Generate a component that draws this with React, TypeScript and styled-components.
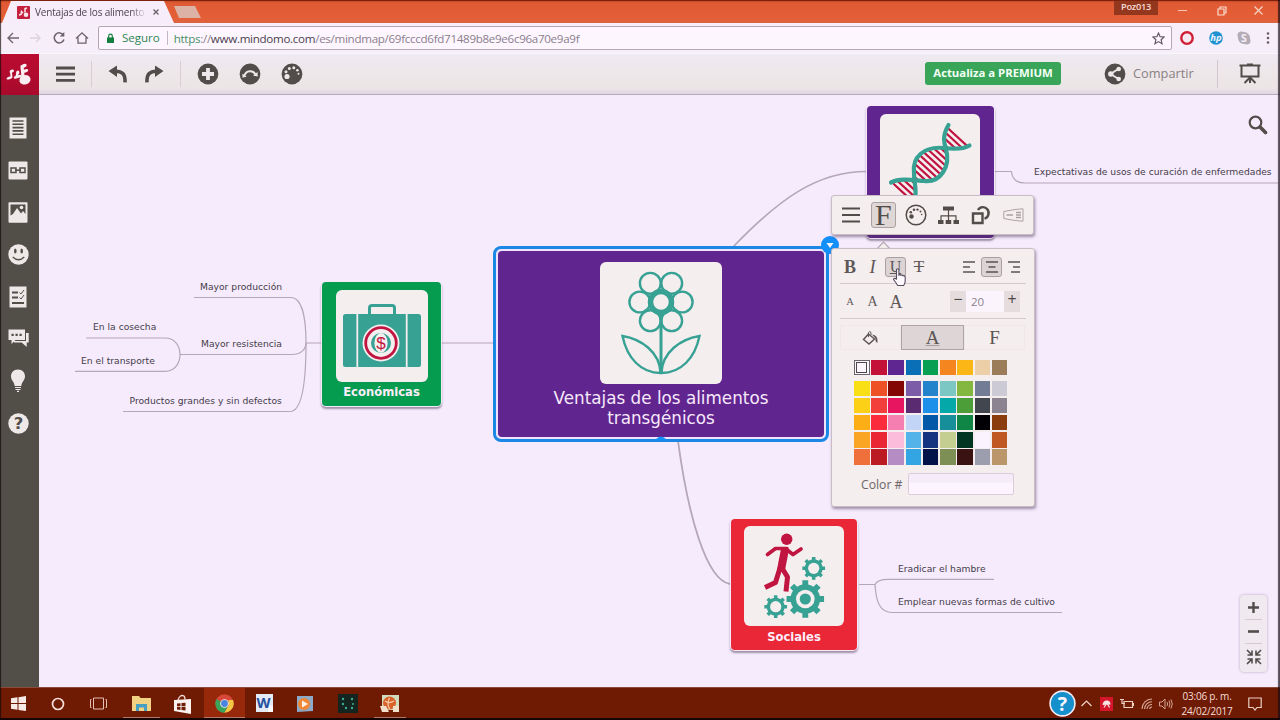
import React from "react";
import styled, { createGlobalStyle, css } from "styled-components";

const UI = `"Open Sans", "Noto Sans", sans-serif`;
const MAP = `"DejaVu Sans", sans-serif`;
const SERIF = `"Liberation Serif", serif`;
const INK = "#524d4b";
const TEAL = "#37a194";
const RED = "#c01540";
const PAPER = "#f5eeef";

const GlobalStyle = createGlobalStyle`
  * { box-sizing: border-box; }
  body { margin: 0; background: #f6ebfd; overflow: hidden; }
  svg { display: block; flex: none; }
`;

const Screen = styled.div`
  position: relative;
  width: 1280px;
  height: 720px;
  display: flex;
  flex-direction: column;
  overflow: hidden;
  font-family: ${UI};
  background: #f6ebfd;
`;

const EdgeShade = styled.div`
  position: absolute;
  inset: 0;
  pointer-events: none;
  box-shadow: inset 2px 0 1px -1px rgba(20, 10, 10, 0.75), inset -3px 0 1px -1px rgba(20, 10, 20, 0.7),
    inset 0 1px 0 #7e210c, inset 0 -2px 0 #150504;
`;

/* ---------- browser ---------- */

const TitleBar = styled.div`
  height: 23px;
  flex: none;
  display: flex;
  align-items: stretch;
  background: linear-gradient(#b8421f 0, #e05b35 3px, #e45f36 18px, #dc6442);
`;

const Tab = styled.div`
  width: 172px;
  margin-left: 2px;
  padding: 1px 13px 0 15px;
  display: flex;
  align-items: center;
  gap: 5px;
  background: #f7ecfa;
  clip-path: polygon(0 100%, 9px 1px, 162px 1px, 100% 100%);
`;

const TabTitle = styled.span`
  width: 112px;
  white-space: nowrap;
  font-size: 10px;
  letter-spacing: -0.18px;
  color: #4c4450;
  -webkit-mask-image: linear-gradient(90deg, #000 85%, rgba(0, 0, 0, 0.2) 97%);
`;

const NewTab = styled.div`
  width: 27px;
  height: 12px;
  margin: 6px 0 0 0;
  background: #dcb2a6;
  clip-path: polygon(0 0, 21px 0, 100% 100%, 5px 100%);
`;

const WindowControls = styled.div`
  margin-left: auto;
  display: flex;
  align-items: flex-start;
`;

const UserBadge = styled.div`
  width: 44px;
  height: 15px;
  line-height: 13px;
  text-align: center;
  font-size: 9.3px;
  font-weight: 600;
  letter-spacing: -0.3px;
  color: #f6dcd6;
  background: #93371f;
`;

const WindowButton = styled.div<{ $w: number }>`
  width: ${(p) => p.$w}px;
  height: 21px;
  display: flex;
  align-items: center;
  justify-content: center;
`;

const AddressRow = styled.div`
  height: 31px;
  flex: none;
  display: flex;
  align-items: center;
  background: #f6eef8;
  border-bottom: 1px solid #fbf5fc;
`;

const NavButtons = styled.div`
  width: 98px;
  display: flex;
  align-items: center;
  padding-left: 6px;
  gap: 9px;
`;

const UrlBox = styled.div`
  width: 1074px;
  height: 24px;
  display: flex;
  align-items: center;
  padding: 0 6px 0 7px;
  background: #fdf6ff;
  border: 1px solid #b5a8b4;
  border-radius: 2px;
  font-size: 11.6px;
  white-space: nowrap;
`;

const Secure = styled.span`
  margin-left: 7px;
  color: #2d8550;
  letter-spacing: -0.05px;
  padding-right: 7px;
  border-right: 1px solid #c5b6c6;
  line-height: 14px;
`;

const Url = styled.span`
  margin-left: 6px;
  color: #8b7e8c;
  letter-spacing: -0.3px;
  em { font-style: normal; color: #4a9067; }
  b { font-weight: 400; color: #4a414c; }
`;

const Extensions = styled.div`
  flex: 1;
  display: flex;
  align-items: center;
  justify-content: space-between;
  padding: 0 10px 0 8px;
`;

/* ---------- app toolbar ---------- */

const AppBar = styled.div`
  height: 41px;
  flex: none;
  display: flex;
  align-items: stretch;
  background: linear-gradient(#efe9f2, #ede7e9 50%, #ece5e6 85%, #dfd6e2);
  border-bottom: 1px solid #b7abbb;
`;

const Logo = styled.div`
  width: 39px;
  height: 41px;
  padding-bottom: 2px;
  background: linear-gradient(#bb0c31, #a80a2c);
  display: flex;
  align-items: center;
  justify-content: center;
`;

const Cell = styled.div<{ $w: number }>`
  width: ${(p) => p.$w}px;
  display: flex;
  align-items: center;
  justify-content: center;
  padding-bottom: 1px;
`;

const Rule = styled.div<{ $ml?: number; $mr?: number }>`
  width: 1px;
  margin: 7px ${(p) => p.$mr ?? 0}px 7px ${(p) => p.$ml ?? 0}px;
  background: #d6cdd6;
`;

const BarRight = styled.div`
  margin-left: auto;
  display: flex;
  align-items: center;
`;

const Premium = styled.div`
  width: 136px;
  height: 23px;
  margin: -2px 42px 0 0;
  line-height: 22px;
  text-align: center;
  border-radius: 3px;
  background: #38a558;
  color: #f4fff6;
  font-size: 11.4px;
  letter-spacing: -0.04px;
  font-weight: 700;
  white-space: nowrap;
`;

const ShareText = styled.div`
  width: 84px;
  padding: 0 0 3px 7px;
  font-size: 12.8px;
  color: #8a8084;
`;

/* ---------- workspace ---------- */

const Work = styled.div`
  flex: 1;
  display: flex;
  min-height: 0;
`;

const Side = styled.div`
  width: 39px;
  flex: none;
  display: flex;
  flex-direction: column;
  align-items: center;
  padding: 12px 3px 0 0;
  background: #524e48;
`;

const SideItem = styled.div`
  height: 42.15px;
  display: flex;
  align-items: center;
`;

const Canvas = styled.div`
  position: relative;
  flex: 1;
  background: #f6ebfd;
`;

const Links = styled.svg`
  position: absolute;
  left: 0;
  top: 0;
`;

const at = css<{ $x: number; $y: number }>`
  position: absolute;
  left: ${(p) => p.$x - 39}px;
  top: ${(p) => p.$y - 95}px;
`;

const Topic = styled.div<{ $x: number; $y: number }>`
  ${at}
  height: 14px;
  line-height: 14px;
  font-family: ${MAP};
  font-size: 9.2px;
  white-space: nowrap;
  color: #453c48;
`;

const Node = styled.div<{ $x: number; $y: number; $w: number; $h: number; $c: string }>`
  ${at}
  width: ${(p) => p.$w}px;
  height: ${(p) => p.$h}px;
  display: flex;
  flex-direction: column;
  align-items: center;
  padding-top: 7.5px;
  border-radius: 4px;
  background: ${(p) => p.$c};
  box-shadow: 0 0 0 1px #f4eaf8, 0 2px 2px 1px rgba(90, 70, 100, 0.55);
`;

const Central = styled.div<{ $x: number; $y: number }>`
  ${at}
  width: 336px;
  height: 196px;
  padding: 2px;
  border: 3.5px solid #1c88e6;
  border-radius: 8px;
  background: #efe4fb;
`;

const CentralFill = styled.div`
  height: 100%;
  padding-top: 11px;
  display: flex;
  flex-direction: column;
  align-items: center;
  border-radius: 4px;
  background: #61258f;
`;

const CentralTitle = styled.div`
  margin-top: 4px;
  font-family: ${MAP};
  font-size: 16.8px;
  line-height: 20px;
  text-align: center;
  color: #f6e9fb;
`;

const Card = styled.div<{ $s: number }>`
  width: ${(p) => p.$s}px;
  height: ${(p) => p.$s}px;
  flex: none;
  border-radius: 6px;
  overflow: hidden;
  background: ${PAPER};
`;

const NodeLabel = styled.div`
  margin-top: 3.5px;
  font-family: ${MAP};
  font-size: 11.6px;
  font-weight: 700;
  line-height: 14px;
  color: #fbeefa;
`;

const Handle = styled.div<{ $x: number; $y: number }>`
  ${at}
`;

const surface = css`
  background: #f5eeee;
  border: 1px solid #c9bec6;
  border-radius: 3px;
  box-shadow: 1px 2px 3px rgba(70, 50, 80, 0.5);
`;

const FloatBar = styled.div<{ $x: number; $y: number }>`
  ${at}
  ${surface}
  width: 203px;
  height: 40px;
  display: flex;
  align-items: center;
  padding-left: 6px;
  padding-bottom: 1px;
`;

const FloatItem = styled.div<{ $on?: boolean }>`
  width: 26px;
  height: 26px;
  margin-right: 6.7px;
  display: flex;
  align-items: center;
  justify-content: center;
  border-radius: 3px;
  font-family: ${SERIF};
  font-size: 30px;
  line-height: 26px;
  color: ${INK};
  ${(p) => p.$on && "background:#dfd6d6;border:1px solid #aaa1a1;"}
`;

const Panel = styled.div<{ $x: number; $y: number }>`
  ${at}
  ${surface}
  width: 204px;
  height: 259px;
  padding: 0 8px;
  display: flex;
  flex-direction: column;
`;

const PanelRow = styled.div<{ $h: number; $pt?: number }>`
  height: ${(p) => p.$h}px;
  flex: none;
  display: flex;
  align-items: center;
  padding-top: ${(p) => p.$pt ?? 0}px;
  border-bottom: 1px solid #d3cacf;
`;

const Glyph = styled.div<{ $w: number; $s: number; $on?: boolean; $b?: boolean; $i?: boolean; $line?: string }>`
  width: ${(p) => p.$w}px;
  height: 20px;
  display: flex;
  align-items: center;
  justify-content: center;
  border: 1px solid ${(p) => (p.$on ? "#aaa0a2" : "transparent")};
  border-radius: 3px;
  background: ${(p) => (p.$on ? "#dbd3d4" : "transparent")};
  font-family: ${SERIF};
  font-size: ${(p) => p.$s}px;
  font-weight: ${(p) => (p.$b ? 700 : 400)};
  font-style: ${(p) => (p.$i ? "italic" : "normal")};
  text-decoration: ${(p) => p.$line ?? "none"};
  line-height: 18px;
  color: #5f5858;
`;

const Push = styled.div<{ $mr?: number }>`
  margin-left: auto;
  margin-right: ${(p) => p.$mr ?? 0}px;
  display: flex;
  align-items: center;
`;

const Step = styled.div`
  width: 16px;
  height: 21px;
  background: #e5dddd;
  color: #4e4848;
  font-size: 16px;
  line-height: 16px;
  text-align: center;
`;

const SizeField = styled.div`
  width: 38px;
  height: 21px;
  padding-left: 5px;
  background: #fbf4fd;
  color: #8b8290;
  font-size: 11.5px;
  line-height: 21px;
`;

const Tabs = styled.div`
  height: 25px;
  margin-top: 6px;
  flex: none;
  display: grid;
  grid-template-columns: 61px 63px 61px;
`;

const TabItem = styled.div<{ $on?: boolean }>`
  display: flex;
  align-items: center;
  justify-content: center;
  font-family: ${SERIF};
  font-size: 19px;
  color: #5b5454;
  border: 1px solid ${(p) => (p.$on ? "#aea4a6" : "#efe7ea")};
  background: ${(p) => (p.$on ? "#ded5d6" : "transparent")};
  u { text-decoration-color: #a79e9f; }
`;

const Swatches = styled.div<{ $mt: number }>`
  margin: ${(p) => p.$mt}px 0 0 14px;
  display: grid;
  grid-template-columns: repeat(9, 15.5px);
  grid-auto-rows: 15.5px;
  gap: 1.72px;
`;

const Swatch = styled.div<{ $c: string }>`
  background: ${(p) => p.$c};
`;

const NoColor = styled.div`
  border: 1px solid #6b6468;
  background: #fbf6fc;
  display: flex;
  align-items: center;
  justify-content: center;
  &::after {
    content: "";
    width: 9px;
    height: 9px;
    border: 1px solid #4f494d;
  }
`;

const HexRow = styled.div`
  margin-top: 8.5px;
  display: flex;
  align-items: center;
  padding-left: 21px;
  font-size: 12.2px;
  color: #6d6567;
`;

const HexInput = styled.div`
  width: 106px;
  height: 22px;
  margin-left: auto;
  margin-right: 12px;
  border: 1px solid #d8cdda;
  border-radius: 2px;
  background: linear-gradient(#f4ecf8 40%, #fcf5ff 45%);
`;

const ZoomBox = styled.div<{ $x: number; $y: number }>`
  ${at}
  width: 27px;
  height: 77px;
  display: flex;
  flex-direction: column;
  border-radius: 4px;
  background: #f0e9ef;
  box-shadow: 0 0 3px rgba(90, 70, 110, 0.4);
`;

const ZoomItem = styled.div<{ $h: number; $line?: boolean }>`
  height: ${(p) => p.$h}px;
  margin: 0 5px;
  display: flex;
  align-items: center;
  justify-content: center;
  ${(p) => p.$line && "border-bottom:1px solid #d3cad3;"}
`;

/* ---------- taskbar ---------- */

const TaskBar = styled.div`
  height: 33px;
  flex: none;
  display: flex;
  background: #6f1b04;
  border-top: 1px solid #8a4a3c;
`;

const Apps = styled.div`
  display: grid;
  grid-template-columns: 36px 43px 39px 46px 40px 41px 39px 42px 43px 41px;
`;

const Task = styled.div<{ $active?: boolean; $open?: boolean }>`
  position: relative;
  display: flex;
  align-items: center;
  justify-content: center;
  padding-bottom: 1px;
  background: ${(p) => (p.$active ? "#97280a" : "transparent")};
  ${(p) =>
    (p.$open || p.$active) &&
    css`
      &::after {
        content: "";
        position: absolute;
        left: ${p.$active ? 0 : 5}px;
        right: ${p.$active ? 0 : 4}px;
        bottom: 1px;
        height: 2px;
        background: #b0786a;
      }
    `}
`;

const Tray = styled.div`
  margin-left: auto;
  display: flex;
  align-items: center;
  padding-bottom: 1px;
`;

const TrayCell = styled.div<{ $w: number }>`
  width: ${(p) => p.$w}px;
  display: flex;
  justify-content: center;
`;

const Clock = styled.div`
  width: 66px;
  text-align: center;
  font-size: 10px;
  letter-spacing: -0.2px;
  line-height: 15px;
  color: #f5ddd6;
  white-space: nowrap;
`;

/* ---------- drawings ---------- */

const Svg = ({ w, h = w, vb, children, ...rest }: any) => (
  <svg width={w} height={h} viewBox={vb ?? `0 0 ${w} ${h}`} fill="none" {...rest}>
    {children}
  </svg>
);

const MindLogo = () => (
  <Svg w={28} h={24} vb="5 61 28 24">
    <g fill="#fbeef2">
      <ellipse cx="24" cy="78.800" rx="5.600" ry="4.700" transform="rotate(-14 24 78.800)" />
      <ellipse cx="23" cy="64.800" rx="2.800" ry="1.800" transform="rotate(-20 23 64.800)" />
      <ellipse cx="24" cy="70" rx="3.400" ry="1.700" transform="rotate(-20 24 70)" />
      <ellipse cx="16.800" cy="71.500" rx="1.600" ry="1.900" />
      <ellipse cx="10.800" cy="70.200" rx="2.300" ry="1.500" transform="rotate(-25 10.800 70.200)" />
      <ellipse cx="8.200" cy="77" rx="2.800" ry="1.400" transform="rotate(-15 8.200 77)" />
    </g>
    <g stroke="#fbeef2" strokeLinecap="round">
      <path d="M21 65.500 22 75.500" strokeWidth="3.200" />
      <path d="M19.500 75 14 76.500M16.500 72l-1 4" strokeWidth="2.400" />
      <path d="M10 71.500 10.500 76" strokeWidth="1.900" />
    </g>
  </Svg>
);

const ArrowTurn = ({ flip }: { flip?: boolean }) => (
  <Svg w={20} h={18}>
    <g transform={flip ? "matrix(-1 0 0 1 20 0)" : undefined}>
      <path d="M.5 6 9 .5V12Z" fill={INK} />
      <path d="M7 6.200C14 6 17.500 9 17 17.300" stroke={INK} strokeWidth="3.600" />
    </g>
  </Svg>
);

const Disc = ({ children }: any) => (
  <Svg w={22}>
    <circle cx="11" cy="11" r="10.400" fill={INK} />
    {children}
  </Svg>
);

const gear = (cx: number, cy: number, r: number, teeth: number) => {
  const pts: string[] = [];
  for (let i = 0; i < teeth; i++) {
    const a = (i / teeth) * Math.PI * 2 - Math.PI / 2;
    const k = Math.PI / teeth;
    [
      [-0.95, 0.78],
      [-0.5, 0.78],
      [-0.4, 1],
      [0.4, 1],
      [0.5, 0.78],
    ].forEach(([o, m]) => {
      pts.push(`${(cx + Math.cos(a + o * k) * r * m).toFixed(2)} ${(cy + Math.sin(a + o * k) * r * m).toFixed(2)}`);
    });
  }
  return `M${pts.join("L")}Z`;
};

const Flower = () => (
  <Svg w={122} vb="600 262 122 122" stroke={TEAL} strokeWidth="2.400">
    {[[650.3, 283.3], [671.7, 283.3], [639.8, 302], [682.2, 302], [650.3, 320.7], [671.7, 320.7]].map(([x, y]) => (
      <circle key={`${x}${y}`} cx={x} cy={y} r="10.400" />
    ))}
    <circle cx="661" cy="302" r="10.500" strokeWidth="5.500" fill={PAPER} />
    <path d="M661 312V373" strokeWidth="3" />
    <path d="M622.500 336C641 339 660 352 660.500 373C641 373 627 358 622.500 336ZM699.500 336C681 339 662 352 661.500 373C681 373 695 358 699.500 336Z" />
  </Svg>
);

const Suitcase = () => (
  <Svg w={92} vb="336 290 92 92">
    <path d="M369.500 316V308q0-2.500 2.500-2.500h20q2.500 0 2.500 2.500v8" stroke={TEAL} strokeWidth="3" />
    <rect x="343" y="314" width="78" height="53" rx="2.500" fill={TEAL} />
    <path d="M357.300 313v55M406.700 313v55" stroke={PAPER} strokeWidth="1.800" />
    <circle cx="381" cy="343" r="18.500" fill={PAPER} />
    <circle cx="381" cy="343" r="15.300" stroke={RED} strokeWidth="2.800" />
    <circle cx="381" cy="343" r="10" fill={TEAL} />
    <ellipse cx="381" cy="343" rx="6.600" ry="10" fill={PAPER} />
    <text x="381" y="349" textAnchor="middle" fontFamily="Liberation Sans, sans-serif" fontSize="17" fill={RED}>$</text>
  </Svg>
);

/* y offsets, at the card's left edge, of the parallel rungs inside the helix */
const rungs = Array.from({ length: 24 }, (_, i) => 45 + i * 6.6);

const Dna = () => (
  <Svg w={100} vb="880 113 100 100" strokeLinecap="round">
    <clipPath id="dnaFill">
      <path d="M947 123L971 145C962 150 952 148 944 147ZM946 147C951 166 940 181 924 180C916 180 914 178 914 172C912 156 924 145 946 147ZM891 181C900 177 912 179 914 179L915 213Z" />
    </clipPath>
    <g clipPath="url(#dnaFill)" stroke={RED} strokeWidth="2.200">
      {rungs.map((y) => <path key={y} d={`M880 ${y}l100 92`} />)}
    </g>
    <g stroke={TEAL} strokeWidth="4.200">
      <path d="M969.500 144.500C962 149 952 148 944 147C924 145 912 156 914 172C914 182 917 188 915 199" />
      <path d="M948.500 124C942 135 944 142 946 148C951 166 940 182 924 180C912 179 900 177 891 181.500" />
    </g>
  </Svg>
);

const Runner = () => (
  <Svg w={100} vb="744 526 100 100" strokeLinecap="round" strokeLinejoin="round">
    <circle cx="786.700" cy="539.300" r="5.700" fill={RED} />
    <g stroke={RED}>
      <path d="M785 549L781 570" strokeWidth="8" strokeLinecap="butt" />
      <path d="M787 548.500L775.500 548.500L767.500 554.500M786 549L793 554.500L801 549" strokeWidth="3.700" />
      <path d="M780 568L775.500 582.500L765 587.500M782 568L787.500 577L786 591.500" strokeWidth="5" strokeLinecap="butt" />
    </g>
    <g fill={TEAL}>
      <path d={gear(813.7, 568.3, 11.5, 8)} />
      <path d={gear(775.7, 606.7, 11.5, 8)} />
      <path d={gear(805.3, 599, 19, 8)} />
    </g>
    <g fill={PAPER}>
      <circle cx="813.700" cy="568.300" r="5.600" />
      <circle cx="775.700" cy="606.700" r="5.600" />
      <circle cx="805.300" cy="599" r="9.300" />
    </g>
    <circle cx="805.300" cy="599" r="5.600" fill={TEAL} />
  </Svg>
);

const light = "#efe8e8";
const sideIcons = [
  <Svg w={18} h={22}>
    <rect width="17" height="21" x=".5" y=".5" fill={light} />
    <path d="M3.500 4h11M3.500 7.300h11M3.500 10.600h11M3.500 13.900h11M3.500 17.200h11" stroke="#524e48" strokeWidth="1.600" />
  </Svg>,
  <Svg w={20} h={19}>
    <rect width="19" height="18" x=".5" y=".5" rx="1" fill={light} />
    <rect x="3" y="7" width="5" height="4.500" stroke="#524e48" strokeWidth="1.500" />
    <rect x="12" y="7" width="5" height="4.500" stroke="#524e48" strokeWidth="1.500" />
    <path d="M7 9.200h6" stroke="#524e48" strokeWidth="1.500" />
  </Svg>,
  <Svg w={20} h={21}>
    <rect width="19" height="20.500" x=".5" y=".3" rx="1" fill={light} />
    <path d="M2.500 2.500h15V12l-2.500-3-2 2.500L9 6l-4 6-2.500 1.500Z" fill="#524e48" />
    <circle cx="13.500" cy="5.500" r="1.800" fill={light} />
  </Svg>,
  <Svg w={21}>
    <circle cx="10.500" cy="10.500" r="10.200" fill={light} />
    <ellipse cx="7.300" cy="7" rx="1.300" ry="2.500" fill="#524e48" />
    <ellipse cx="13.700" cy="7" rx="1.300" ry="2.500" fill="#524e48" />
    <path d="M4.800 13q5.700 5.500 11.400 0" stroke="#524e48" strokeWidth="1.400" />
  </Svg>,
  <Svg w={18} h={22}>
    <rect width="17" height="21" x=".5" y=".5" fill={light} />
    <path d="M3 6.500h6M3 11.500h6M3 17h12" stroke="#524e48" strokeWidth="1.900" />
    <path d="M10.500 6.500l1.500 1.500 3-4M10.500 11.500l1.500 1.500 3-4" stroke="#524e48" strokeWidth="1" />
  </Svg>,
  <Svg w={21} h={19}>
    <path d="M18 4h2.700v9.500h-2V18l-5-4.500H6V12h12Z" fill={light} />
    <path d="M.5.500H17V11H7.500l-4 4V11h-3Z" fill={light} />
    <path d="M3.500 5.800h2.200M7.500 5.800h2.200M11.500 5.800h2.200" stroke="#524e48" strokeWidth="2.200" />
  </Svg>,
  <Svg w={16} h={23}>
    <path d="M8 .5c4.500 0 7 3 7 6.800 0 4-3.200 5.200-3.700 9.700H4.700C4.200 12.500 1 11.300 1 7.300 1 3.500 3.500.500 8 .5Z" fill={light} />
    <path d="M5 18.500h6M5.500 20.500h5M7 22.300h2" stroke={light} strokeWidth="1.200" />
  </Svg>,
  <Svg w={21}>
    <circle cx="10.500" cy="10.500" r="10.200" fill={light} />
    <text x="10.500" y="16.300" textAnchor="middle" fontFamily="DejaVu Sans, sans-serif" fontWeight="700" fontSize="16.500" fill="#524e48">?</text>
  </Svg>,
];

const mainPalette = ["#c41138", "#5f2591", "#0a6fb7", "#07a052", "#f5861f", "#fcb716", "#eccfa6", "#9b7d5a"];
const palette = [
  "#f8df16", "#ee5126", "#840604", "#7c5ca9", "#2383cb", "#7cc6c3", "#84b740", "#727d95", "#cccbd5",
  "#fdd018", "#f23f3c", "#e7155f", "#5b2b72", "#1e90ea", "#05a8a8", "#4c9f38", "#42464e", "#8b8490",
  "#fcae17", "#fb2d3c", "#f47fb0", "#c3d5f6", "#0359a8", "#178f9b", "#108646", "#020106", "#8b3d0e",
  "#fba524", "#eb2634", "#fbbbdb", "#54b4ea", "#133380", "#c3ce90", "#033523", "#fbf4ff", "#c05824",
  "#f0703c", "#bc1b24", "#b58dc4", "#32a5e2", "#02134a", "#7e8f55", "#3a1212", "#9c9dad", "#bb966b",
];

const Align = ({ d }: { d: string }) => (
  <Svg w={14} h={14} stroke="#5b5454" strokeWidth="1.500">
    <path d={d} />
  </Svg>
);

export default function App() {
  return (
    <Screen>
      <GlobalStyle />
      <TitleBar>
        <Tab>
          <Svg w={13}>
            <rect width="13" height="13" rx="1" fill="#c4213f" />
            <circle cx="9" cy="8.800" r="2.300" fill="#fbe8ee" />
            <path d="M8 6.500V2.500L10 2M2 9l2-.5.500-3L6 7" stroke="#fbe8ee" strokeWidth="1.500" />
          </Svg>
          <TabTitle>Ventajas de los alimento</TabTitle>
          <Svg w={8} stroke="#6b6068" strokeWidth="1.300"><path d="M1.500 1.500l5 5M6.500 1.500l-5 5" /></Svg>
        </Tab>
        <NewTab />
        <WindowControls>
          <UserBadge>Poz013</UserBadge>
          <WindowButton $w={48}><Svg w={9} h={9} stroke="#f5c4b2"><path d="M0 4.500h9" /></Svg></WindowButton>
          <WindowButton $w={31}>
            <Svg w={10} stroke="#f9ddd2" strokeWidth="1.200"><path d="M1 3h6v6H1ZM3 3V1h6v6H7" /></Svg>
          </WindowButton>
          <WindowButton $w={43}><Svg w={9} stroke="#f9d3c5" strokeWidth="1.200"><path d="M.5.500l8 8M8.500.500l-8 8" /></Svg></WindowButton>
        </WindowControls>
      </TitleBar>

      <AddressRow>
        <NavButtons>
          <Svg w={14} stroke="#706670" strokeWidth="1.400"><path d="M13 7H2M7 2 2 7l5 5" /></Svg>
          <Svg w={14} stroke="#ddd2de" strokeWidth="1.400"><path d="M1 7h10M7 3l4 4-4 4" /></Svg>
          <Svg w={14} stroke="#6b616c" strokeWidth="1.500"><path d="M11.500 4.200A5 5 0 1 0 12 8.500" /><path d="M12.300 1v4.600H7.700Z" fill="#6b616c" stroke="none" /></Svg>
          <Svg w={14} stroke="#6b616c" strokeWidth="1.300"><path d="M1 7.500 7 1.800l6 5.700M3 6.500v5.700h8V6.500" /></Svg>
        </NavButtons>
        <UrlBox>
          <Svg w={9} h={11}>
            <rect x="1" y="4.500" width="7" height="5.500" fill="#15803e" />
            <path d="M2.700 5V3a1.800 1.800 0 0 1 3.600 0v2" stroke="#15803e" strokeWidth="1.200" />
          </Svg>
          <Secure>Seguro</Secure>
          <Url><em>https</em>://<b>www.mindomo.com</b>/es/mindmap/69fcccd6fd71489b8e9e6c96a70e9a9f</Url>
          <Push>
            <Svg w={13} stroke="#665c68" strokeWidth="1.200">
              <path d="M6.500 1l1.600 3.700 4 .3-3 2.700.9 4-3.500-2.100L3 11.700l.9-4-3-2.700 4-.3Z" />
            </Svg>
          </Push>
        </UrlBox>
        <Extensions>
          <Svg w={14}>
            <circle cx="7" cy="7" r="5.700" stroke="#cf1f34" strokeWidth="2.400" />
            <path d="M4.300 6.500V9.500l1.200 1.800h3L9.800 8.500V3.500L8 2.800 5.500 3Z" fill="#f8eaf3" />
          </Svg>
          <Svg w={14}>
            <circle cx="7" cy="7" r="6.800" fill="#1f93d2" />
            <text x="7" y="10" textAnchor="middle" fontFamily="Open Sans, sans-serif" fontWeight="700" fontStyle="italic" fontSize="9.500" fill="#f2f4fc">hp</text>
          </Svg>
          <Svg w={14} fill="#b5adb6">
            <circle cx="4.300" cy="4.300" r="3.800" /><circle cx="9.700" cy="9.700" r="3.800" /><circle cx="7" cy="7" r="6" />
            <text x="7" y="10.800" textAnchor="middle" fontFamily="Open Sans, sans-serif" fontWeight="700" fontSize="10.500" fill="#f6eef8">S</text>
          </Svg>
          <Svg w={4} h={14} fill="#665c66"><circle cx="2" cy="2.500" r="1.300" /><circle cx="2" cy="7" r="1.300" /><circle cx="2" cy="11.500" r="1.300" /></Svg>
        </Extensions>
      </AddressRow>

      <AppBar>
        <Logo><MindLogo /></Logo>
        <Cell $w={52}><Svg w={19} h={16} stroke={INK} strokeWidth="2.800"><path d="M0 2h19M0 8.200h19M0 14.400h19" /></Svg></Cell>
        <Rule $mr={8} />
        <Cell $w={36}><ArrowTurn /></Cell>
        <Cell $w={36}><ArrowTurn flip /></Cell>
        <Rule $ml={8} $mr={6} />
        <Cell $w={42}><Disc><path d="M11 5v12M5 11h12" stroke="#efe8ea" strokeWidth="3.800" /></Disc></Cell>
        <Cell $w={42}>
          <Disc>
            <path d="M5.500 12.500C7 7.500 14 6.500 16.500 11.500" stroke="#efe8ea" strokeWidth="2" />
            <path d="M3.300 10.800l.2 4 4.300-1.300ZM18.500 9l.3 4.500-4.800-1Z" fill="#efe8ea" />
          </Disc>
        </Cell>
        <Cell $w={42}>
          <Disc>
            <g fill="#efe8ea">
              <circle cx="6" cy="13.500" r="2.600" /><circle cx="5" cy="8.800" r="1.500" /><circle cx="8.300" cy="5.500" r="1.500" />
              <circle cx="12.800" cy="4.700" r="1.500" /><circle cx="16.400" cy="7.300" r="1.300" /><circle cx="17.500" cy="10.800" r="1" />
            </g>
          </Disc>
        </Cell>
        <BarRight>
          <Premium>Actualiza a PREMIUM</Premium>
          <Cell $w={23}>
            <Disc>
              <path d="M15 5.500 6.500 11 15 16.200" stroke="#efe8ea" strokeWidth="1.800" />
              <g fill="#efe8ea"><circle cx="6.800" cy="11" r="2.700" /><circle cx="14.700" cy="6" r="2.300" /><circle cx="14.700" cy="16" r="2.300" /></g>
            </Disc>
          </Cell>
          <ShareText>Compartir</ShareText>
          <Cell $w={7} />
          <Svg w={1} h={28} stroke="#d0c7d0"><path d="M.5 0v28" /></Svg>
          <Cell $w={62}>
            <Svg w={24} h={21} vb="-2 0 24 21" stroke={INK} strokeWidth="2">
              <path d="M.5 2.500h21M2.500 3v10.500h17V3M11 13.500V20M10.500 15l-5 5M11.500 15l5 5M8 1.500h6" />
            </Svg>
          </Cell>
        </BarRight>
      </AppBar>

      <Work>
        <Side>{sideIcons.map((icon, i) => <SideItem key={i}>{icon}</SideItem>)}</Side>
        <Canvas>
          <Links width="1241" height="592" viewBox="39 95 1241 592" fill="none" stroke="#b5a6b8" strokeWidth="1.200">
            <path d="M733 247C780 198 818 171.500 866 171.500" strokeWidth="1.700" />
            <path d="M678 441C688 515 706 580 730 584" strokeWidth="1.800" />
            <path d="M994 171.500h17.500C1012 178 1016 183 1025 183H1278" />
            <path d="M441 343h52M322 343h-16" />
            <path d="M194 297.500h97C302 297.500 306 318 306 343C306 386 301 411.500 290 411.500H123" />
            <path d="M306 343C306 350 300 354.500 292 354.500H180" />
            <path d="M86 338h79C175 338 180 346 180 354.500C180 363 175 371.300 165 371.300H75" />
            <path d="M859 584.500h16C877 580 882 579.300 888 579.300H994M875 584.500C876 602 880 612.500 892 612.500H1062" />
          </Links>

          <Topic $x={200} $y={280}>Mayor producción</Topic>
          <Topic $x={93} $y={320}>En la cosecha</Topic>
          <Topic $x={81} $y={354}>En el transporte</Topic>
          <Topic $x={201} $y={337}>Mayor resistencia</Topic>
          <Topic $x={129.5} $y={394}>Productos grandes y sin defectos</Topic>
          <Topic $x={1034} $y={165}>Expectativas de usos de curación de enfermedades</Topic>
          <Topic $x={898} $y={562}>Eradicar el hambre</Topic>
          <Topic $x={898} $y={595}>Emplear nuevas formas de cultivo</Topic>

          <Node $x={322} $y={282} $w={119} $h={124} $c="#069c50">
            <Card $s={92}><Suitcase /></Card>
            <NodeLabel>Económicas</NodeLabel>
          </Node>
          <Node $x={866.5} $y={106} $w={127} $h={132} $c="#61258f">
            <Card $s={100}><Dna /></Card>
          </Node>
          <Node $x={731} $y={518.5} $w={126} $h={131.5} $c="#ea2736">
            <Card $s={100}><Runner /></Card>
            <NodeLabel>Sociales</NodeLabel>
          </Node>

          <Central $x={493} $y={246}>
            <CentralFill>
              <Card $s={122}><Flower /></Card>
              <CentralTitle>Ventajas de los alimentos<br />transgénicos</CentralTitle>
            </CentralFill>
          </Central>
          <Handle $x={655} $y={435}><Svg w={12} h={7}><path d="M0 5Q6-2 12 5Z" fill="#1190fa" /></Svg></Handle>
          <Handle $x={821} $y={236}>
            <Svg w={18}><circle cx="9" cy="9" r="9" fill="#138ffb" /><path d="M5.500 7h7L9 12Z" fill="#f7f3ff" /></Svg>
          </Handle>

          <FloatBar $x={831} $y={195}>
            <FloatItem><Svg w={18} h={16} stroke={INK} strokeWidth="2"><path d="M0 1.500h18M0 8h18M0 14.500h18" /></Svg></FloatItem>
            <FloatItem $on>F</FloatItem>
            <FloatItem>
              <Svg w={22}>
                <circle cx="11" cy="11" r="9.800" stroke={INK} strokeWidth="1.500" />
                <g fill={INK}>
                  <circle cx="6.500" cy="12.500" r="2.200" /><circle cx="5.800" cy="8.300" r="1.300" /><circle cx="9" cy="5.800" r="1.300" />
                  <circle cx="12.500" cy="5.600" r="1.200" /><circle cx="15.500" cy="7.500" r="1" /><circle cx="16.700" cy="10.500" r=".8" />
                </g>
              </Svg>
            </FloatItem>
            <FloatItem>
              <Svg w={21} h={18}>
                <path d="M5 .5h11v4H5ZM0 14h5.500v4H0ZM7.700 14h5.500v4h-5.500ZM15.500 14H21v4h-5.500Z" fill={INK} />
                <path d="M10.500 4v10M3 14V9.800h15V14" stroke={INK} strokeWidth="1.200" />
              </Svg>
            </FloatItem>
            <FloatItem>
              <Svg w={20} stroke={INK} strokeWidth="2.400">
                <path d="M2 8.500h9.500V18H2Z" />
                <path d="M7 5C9 1.500 14 1 16.500 4.500C19 8 17 13 13.500 13.500" />
              </Svg>
            </FloatItem>
            <FloatItem>
              <Svg w={21} h={14} stroke="#aaa1a3">
                <path d="M.8 3.500 12 1.500 20 .8V13.200L12 12.500.8 10.500Z" />
                <path d="M3.500 7h6.500M13 4.500h5M13 7h5M13 9.500h5" strokeWidth="1.600" />
              </Svg>
            </FloatItem>
          </FloatBar>

          <Handle $x={875} $y={241}><Svg w={17} h={9}><path d="M1.500 8.500 8.500 1l7 7.500" fill="#f5eeee" stroke="#b9adb8" strokeWidth="1.200" /></Svg></Handle>
          <Panel $x={831} $y={248}>
            <PanelRow $h={35} $pt={2}>
              <Glyph $w={20} $s={18} $b>B</Glyph>
              <Glyph $w={25} $s={18.5} $i>I</Glyph>
              <Glyph $w={21} $s={16} $on $line="underline">U</Glyph>
              <Glyph $w={26} $s={17} $line="line-through">T</Glyph>
              <Push>
                <Glyph $w={24} $s={12}><Align d="M1 2h12M1 7h7M1 12h12" /></Glyph>
                <Glyph $w={21} $s={12} $on><Align d="M1 2h12M3.500 7h7M1 12h12" /></Glyph>
                <Glyph $w={24} $s={12}><Align d="M1 2h12M6 7h7M4 12h9" /></Glyph>
              </Push>
            </PanelRow>
            <PanelRow $h={35} $pt={1}>
              <Glyph $w={20} $s={10.5}>A</Glyph>
              <Glyph $w={25} $s={14}>A</Glyph>
              <Glyph $w={22} $s={18}>A</Glyph>
              <Push $mr={6}>
                <Step>−</Step>
                <SizeField>20</SizeField>
                <Step>+</Step>
              </Push>
            </PanelRow>
            <Tabs>
              <TabItem>
                <Svg w={17} h={16}>
                  <path d="M6.500 4 12.500 9 7 14 1.500 9.500Z" stroke="#5b5454" strokeWidth="1.400" />
                  <path d="M6.500 7V2.500q1.500-2 2.500 0V5" stroke="#5b5454" />
                  <path d="M10 4.500Q16.500 5 15.500 13Q13 11.500 13.500 8.500Z" fill="#5b5454" />
                </Svg>
              </TabItem>
              <TabItem $on><u>A</u></TabItem>
              <TabItem>F</TabItem>
            </Tabs>
            <Swatches $mt={9.5}>
              <NoColor />
              {mainPalette.map((c) => <Swatch key={c} $c={c} />)}
            </Swatches>
            <Swatches $mt={5.5}>{palette.map((c, i) => <Swatch key={i} $c={c} />)}</Swatches>
            <HexRow>Color #<HexInput /></HexRow>
          </Panel>
          <Handle $x={892} $y={267}>
            <Svg w={15} h={21}>
              <path d="M4.500 12V2.500q1.200-1.600 2.400 0V8q1-.8 2.100.3 1-.8 2 .5 1.200-.6 2.200.8V14q0 2-1.500 4.500H5.700Q4 15.500 1.500 12.500q.5-2 3-.5Z" fill="#fffaff" stroke="#544c5c" strokeWidth="1.100" />
            </Svg>
          </Handle>

          <Handle $x={1248} $y={115}>
            <Svg w={20} stroke={INK}><circle cx="7.500" cy="7.500" r="5.800" strokeWidth="2.200" /><path d="M12 12l5.500 5.500" strokeWidth="3.600" strokeLinecap="round" /></Svg>
          </Handle>

          <ZoomBox $x={1240} $y={595}>
            <ZoomItem $h={25} $line><Svg w={11} stroke={INK} strokeWidth="2.400"><path d="M5.500 0v11M0 5.500h11" /></Svg></ZoomItem>
            <ZoomItem $h={24} $line><Svg w={11} h={3} stroke={INK} strokeWidth="2.600"><path d="M0 1.500h11" /></Svg></ZoomItem>
            <ZoomItem $h={26}>
              <Svg w={16} stroke={INK} strokeWidth="1.600">
                <path d="M1 1l4.500 4.500M15 1l-4.500 4.500M1 15l4.500-4.500M15 15l-4.500-4.500M1.500 6h4.500V1.500M10 1.500V6h4.500M1.500 10h4.500v4.500M10 14.500V10h4.500" />
              </Svg>
            </ZoomItem>
          </ZoomBox>
        </Canvas>
      </Work>

      <TaskBar>
        <Apps>
          <Task><Svg w={15} fill="#f7e9e6"><path d="M0 2.200 6.500 1.300V7H0ZM7.500 1.200 15 0v7H7.500ZM0 8h6.500v5.800L0 12.800ZM7.500 8H15v7l-7.500-1.100Z" /></Svg></Task>
          <Task><Svg w={14}><circle cx="7" cy="7" r="5.500" stroke="#f7e0da" strokeWidth="1.700" /></Svg></Task>
          <Task><Svg w={17} h={13} stroke="#e5bfb3"><path d="M3.500 1h10v11h-10ZM1.500 2.500H.5v8h1M15.500 2.500h1v8h-1" /></Svg></Task>
          <Task $open>
            <Svg w={19} h={17}>
              <path d="M0 1h7l1.500 2H19v13H0Z" fill="#f1d283" /><path d="M4 16V9h11v7h-3v-3.500H7V16Z" fill="#45a0c4" />
            </Svg>
          </Task>
          <Task>
            <Svg w={21} h={20} vb="1 0 21 20">
              <path d="M1 6l17-1v15L1 17Z" fill="#fbf1f1" /><path d="M5 6q2-6 6-4 1 1 1 3.500" stroke="#f3dbd6" strokeWidth="1.300" />
              <path d="M4 9.500l3.500-.3v3H4ZM8.500 9l4-.3v3.500h-4ZM4 13h3.500v3L4 15.600ZM8.500 13h4v3.600l-4-.5Z" fill="#6f1b04" />
            </Svg>
          </Task>
          <Task $active>
            <Svg w={19}>
              <circle cx="9.500" cy="9.500" r="9.200" fill="#d9463a" />
              <path d="M1.500 5A9.200 9.200 0 0 0 9.500 18.700L13 12Z" fill="#3aa35a" />
              <path d="M18 6A9.200 9.200 0 0 1 9.500 18.700L13.500 11.500V6Z" fill="#f3c744" />
              <circle cx="9.500" cy="9.500" r="4.300" fill="#f5ecec" /><circle cx="9.500" cy="9.500" r="3.400" fill="#4a84dc" />
            </Svg>
          </Task>
          <Task>
            <Svg w={19}>
              <rect x="1" y="0" width="17" height="18" fill="#e5ebf6" />
              <path d="M13 12h5v6h-5Z" fill="#fffafc" />
              <text x="8.500" y="14" textAnchor="middle" fontFamily="Open Sans, sans-serif" fontWeight="700" fontSize="14.500" fill="#24519f">W</text>
            </Svg>
          </Task>
          <Task>
            <Svg w={18}>
              <path d="M1 1h16v15L1 17Z" fill="#8ea9c6" /><circle cx="8" cy="9" r="6" fill="#ef8836" /><path d="M6 5.500 12 9l-6 3.500Z" fill="#fff3ea" />
            </Svg>
          </Task>
          <Task>
            <Svg w={20}>
              <rect width="20" height="19" fill="#14241f" />
              <g fill="#3fae98"><circle cx="5" cy="5" r="1.200" /><circle cx="14" cy="5" r="1.200" /><circle cx="5" cy="10" r="1.200" /><circle cx="8" cy="14" r="1.200" /><circle cx="14" cy="14" r="1.200" /><circle cx="15" cy="10" r="1" /></g>
            </Svg>
          </Task>
          <Task $open>
            <Svg w={21} h={20}>
              <path d="M3 1h17v15H3Z" fill="#cfdcc0" /><circle cx="10.500" cy="9" r="6.500" fill="#d9612c" />
              <path d="M10.500 4q-3 5 0 11M6 7q4 3 9 0" stroke="#f6c9a0" strokeWidth="1.300" />
              <path d="M1 12h6l3 6H3ZM14 12h6v6h-6Z" fill="#f1dfc9" />
            </Svg>
          </Task>
        </Apps>
        <Tray>
          <TrayCell $w={28}>
            <Svg w={27}>
              <circle cx="13.500" cy="13.500" r="13.200" fill="#f6ecf3" /><circle cx="13.500" cy="13.500" r="11.600" fill="#168fcd" />
              <text x="13.500" y="20.500" textAnchor="middle" fontFamily="Open Sans, sans-serif" fontWeight="700" fontSize="19.500" fill="#fbf6fd">?</text>
            </Svg>
          </TrayCell>
          <TrayCell $w={20}><Svg w={11} h={7} stroke="#f0d4cb" strokeWidth="1.200"><path d="M.5 6 5.500 1l5 5" /></Svg></TrayCell>
          <TrayCell $w={20}>
            <Svg w={13} h={14}><rect width="13" height="14" fill="#d5152c" /><path d="M2.500 8Q3 3 7.500 3.500 10.500 4 10.500 7.500Z" fill="#fbe3e5" /><path d="M7 6l2.500 4.500M4 10.500l2-3" stroke="#fbe3e5" strokeWidth="1.200" /></Svg>
          </TrayCell>
          <TrayCell $w={21}>
            <Svg w={14} h={11} stroke="#ecd0c6"><path d="M4 3.500h8.500v6H4ZM13.500 5v3M0 1.500h4M2 1.500v4h3" strokeWidth="1.200" /></Svg>
          </TrayCell>
          <TrayCell $w={20}>
            <Svg w={12} h={12} stroke="#d8aa9b" strokeWidth="1.100"><path d="M1 11A10 10 0 0 1 11 1M3.500 11A7.500 7.500 0 0 1 11 3.700M6 11a5 5 0 0 1 5-4.500M8.500 11A2.500 2.500 0 0 1 11 9" /></Svg>
          </TrayCell>
          <TrayCell $w={17}>
            <Svg w={14} h={12} stroke="#d3a294"><path d="M.5 4h2.500L6 1v10L3 8H.5ZM8 4q1.200 2 0 4M10 2.500q2 3.500 0 7M12 1.500q2.500 4.500 0 9" /></Svg>
          </TrayCell>
          <Clock>03:06 p. m.<br />24/02/2017</Clock>
          <TrayCell $w={30}>
            <Svg w={14} h={14} stroke="#eacfc6" strokeWidth="1.200"><path d="M.8 1h12.400v9.500H9l-2 2.500-2-2.500H.8Z" /></Svg>
          </TrayCell>
          <TrayCell $w={10} />
        </Tray>
      </TaskBar>
      <EdgeShade />
    </Screen>
  );
}
